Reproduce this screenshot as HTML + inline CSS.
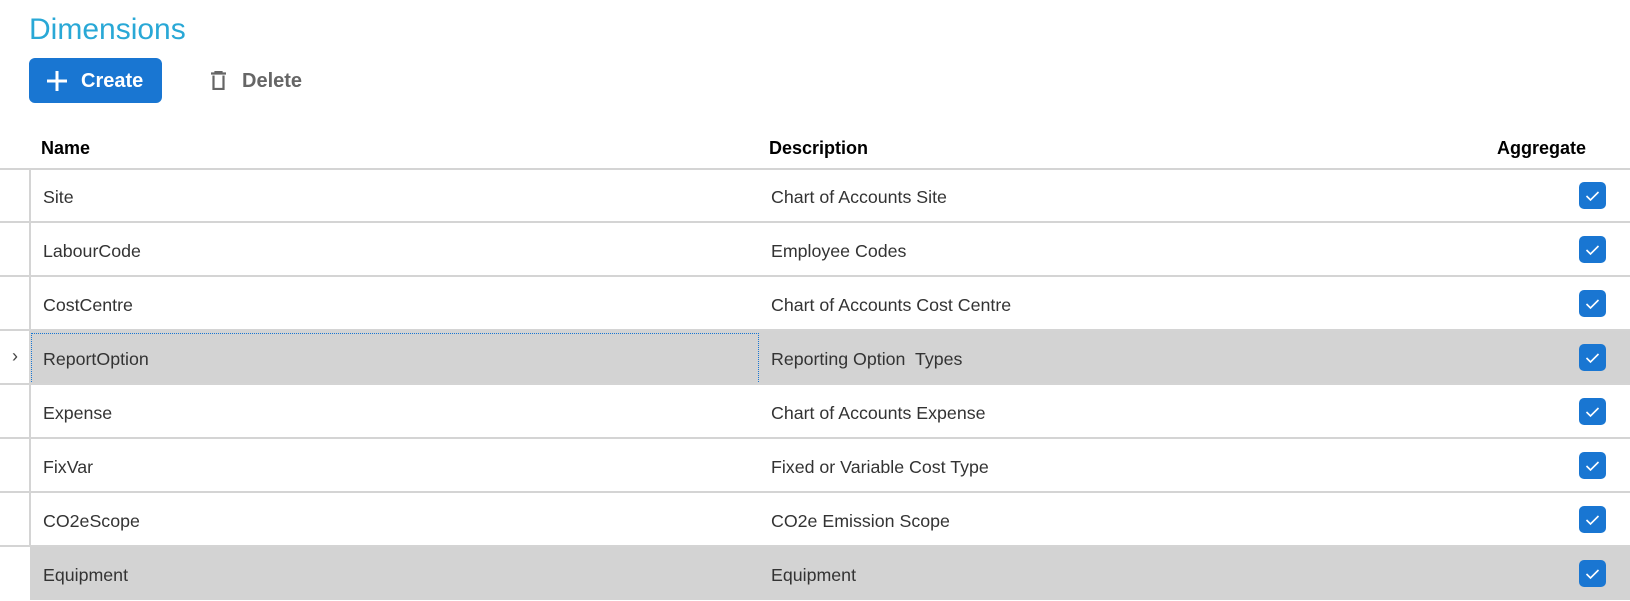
<!DOCTYPE html>
<html><head><meta charset="utf-8"><style>
body{margin:0;width:1630px;height:600px;overflow:hidden;background:#fff;font-family:"Segoe UI","Liberation Sans",sans-serif;position:relative}
.a{position:absolute}
.t{font-size:30px;color:#29a8d6;left:29px;top:13px}
.btn{left:29px;top:58px;width:133px;height:45px;background:#1976d2;border-radius:6px;color:#fff;font-weight:bold;font-size:20px}
.h{font-weight:bold;font-size:18px;color:#000;top:138px}
.line{left:0;width:1630px;height:2px;background:#d4d4d4}
.cell{font-size:17.8px;color:#333;line-height:52px}
</style></head><body>
<div class="a t">Dimensions</div>
<div class="a btn">
<svg class="a" style="left:17px;top:12px" width="22" height="22" viewBox="0 0 22 22"><path d="M11 1V21M1 11H21" stroke="#fff" stroke-width="3"/></svg>
<span class="a" style="left:52px;top:12px">Create</span></div>
<svg class="a" style="left:211px;top:71px" width="15" height="19" viewBox="0 0 15 19"><path d="M0 2.5H15M4.5 2.5V1H10.5V2.5M2.5 4.5V18H12.5V4.5" fill="none" stroke="#666" stroke-width="2.2"/></svg>
<div class="a" style="left:242px;top:70px;font-size:20px;font-weight:bold;color:#666">Delete</div>
<div class="a h" style="left:41px">Name</div>
<div class="a h" style="left:769px">Description</div>
<div class="a h" style="left:1497px">Aggregate</div>
<div class="a" style="left:30px;top:330px;width:1600px;height:54px;background:#d3d3d3"></div>
<div class="a" style="left:30px;top:546px;width:1600px;height:54px;background:#d3d3d3"></div>
<div class="a" style="left:31px;top:333px;width:726px;height:49px;border:1px dotted #1976d2"></div>
<div class="a" style="left:29px;top:169px;width:2px;height:377px;background:#d4d4d4"></div>
<div class="a" style="left:12px;top:346px;font-size:18px;color:#444">&#8250;</div>
<div class="a line" style="top:168px"></div>
<div class="a line" style="top:221px"></div>
<div class="a line" style="top:275px"></div>
<div class="a line" style="top:329px"></div>
<div class="a line" style="top:383px"></div>
<div class="a line" style="top:437px"></div>
<div class="a line" style="top:491px"></div>
<div class="a line" style="top:545px"></div>
<div class="a cell" style="left:43px;top:171px">Site</div><div class="a cell" style="left:771px;top:171px">Chart of Accounts Site</div>
<div class="a cell" style="left:43px;top:225px">LabourCode</div><div class="a cell" style="left:771px;top:225px">Employee Codes</div>
<div class="a cell" style="left:43px;top:279px">CostCentre</div><div class="a cell" style="left:771px;top:279px">Chart of Accounts Cost Centre</div>
<div class="a cell" style="left:43px;top:333px">ReportOption</div><div class="a cell" style="left:771px;top:333px;white-space:pre">Reporting Option  Types</div>
<div class="a cell" style="left:43px;top:387px">Expense</div><div class="a cell" style="left:771px;top:387px">Chart of Accounts Expense</div>
<div class="a cell" style="left:43px;top:441px">FixVar</div><div class="a cell" style="left:771px;top:441px">Fixed or Variable Cost Type</div>
<div class="a cell" style="left:43px;top:495px">CO2eScope</div><div class="a cell" style="left:771px;top:495px">CO2e Emission Scope</div>
<div class="a cell" style="left:43px;top:549px">Equipment</div><div class="a cell" style="left:771px;top:549px">Equipment</div>
<svg class="a" style="left:0;top:0" width="1630" height="600">
<defs><g id="c"><rect x="0" y="0" width="27" height="27" rx="5" fill="#1976d2"/><path d="M7.5 14L11.5 18L19.5 10" fill="none" stroke="#fff" stroke-width="1.6"/></g></defs>
<use href="#c" x="1579" y="182"/><use href="#c" x="1579" y="236"/><use href="#c" x="1579" y="290"/><use href="#c" x="1579" y="344"/><use href="#c" x="1579" y="398"/><use href="#c" x="1579" y="452"/><use href="#c" x="1579" y="506"/><use href="#c" x="1579" y="560"/>
</svg>
</body></html>
